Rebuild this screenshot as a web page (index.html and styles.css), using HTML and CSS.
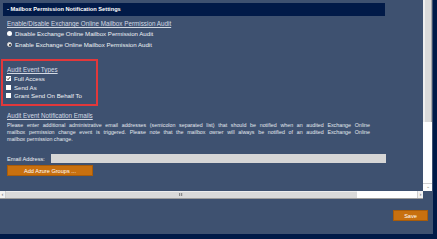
FILE: index.html
```html
<!DOCTYPE html>
<html>
<head>
<meta charset="utf-8">
<link rel="stylesheet" href="styles.css">
</head>
<body>
<div class="window">
  <div class="viewport">
    <div class="content">
      <div class="panel-title">- Mailbox Permission Notification Settings</div>

      <div class="section audit-toggle">
        <div class="heading">Enable/Disable Exchange Online Mailbox Permission Audit</div>
        <label class="opt radio-row"><span class="radio"></span>Disable Exchange Online Mailbox Permission Audit</label>
        <label class="opt radio-row"><span class="radio checked"></span>Enable Exchange Online Mailbox Permission Audit</label>
      </div>

      <div class="highlight">
        <div class="heading">Audit Event Types</div>
        <label class="opt check-row"><span class="check checked"><svg viewBox="0 0 6 6" width="6" height="6"><path d="M1.2 3.1 L2.5 4.4 L4.9 1.4" fill="none" stroke="#222" stroke-width="1.1"/></svg></span>Full Access</label>
        <label class="opt check-row"><span class="check"></span>Send As</label>
        <label class="opt check-row"><span class="check"></span>Grant Send On Behalf To</label>
      </div>

      <div class="section emails">
        <div class="heading">Audit Event Notification Emails</div>
        <p class="note">
          <span class="jline">Please enter additional administrative email addresses (semicolon separated list) that should be notified when an audited Exchange Online</span>
          <span class="jline">mailbox permission change event is triggered. Please note that the mailbox owner will always be notified of an audited Exchange Online</span>
          <span class="lline">mailbox permission change.</span>
        </p>
        <div class="email-row">
          <span class="email-label">Email Address:</span>
          <span class="email-input"></span>
        </div>
        <div class="btn add-btn">Add Azure Groups ...</div>
      </div>
    </div>

    <div class="vscroll">
      <div class="vthumb"></div>
      <div class="vtrack"></div>
      <div class="varrow">&#8964;</div>
    </div>

    <div class="hscroll">
      <div class="harrow">&#8249;</div>
      <div class="hthumb"><span class="grip"></span></div>
      <div class="htrack"></div>
      <div class="harrow">&#8250;</div>
    </div>
    <div class="corner"></div>
  </div>

  <div class="footer">
    <div class="btn save-btn">Save</div>
  </div>
</div>
</body>
</html>
```
FILE: styles.css
```css
html, body {
  margin: 0;
  padding: 0;
}
body {
  width: 437px;
  height: 239px;
  overflow: hidden;
  background: #001a47;
  font-family: "Liberation Sans", Arial, sans-serif;
  color: #e9edf3;
}
.window {
  width: 433px;
  height: 234px;
  background: #3e5170;
  display: flex;
  flex-direction: column;
}
.viewport {
  display: grid;
  grid-template-columns: 423px 9px;
  grid-template-rows: 191px 8px;
}
.content {
  padding: 3px 0 0 3px;
  overflow: hidden;
}
.panel-title {
  width: 378px;
  height: 13px;
  background: #011a48;
  color: #ffffff;
  font-weight: bold;
  font-size: 5.7px;
  line-height: 13px;
  padding-left: 4px;
}
.section {
  padding-left: 4px;
}
.audit-toggle {
  margin-top: 4px;
}
.heading {
  font-size: 6.3px;
  line-height: 8px;
  color: #d4dae4;
  text-decoration: underline;
}
.opt {
  display: flex;
  align-items: center;
  font-size: 6.1px;
  color: #eef1f5;
}
.radio-row {
  height: 11px;
}
.radio {
  width: 5px;
  height: 5px;
  border-radius: 50%;
  background: #ffffff;
  margin: 0 3px 0 0;
  box-sizing: border-box;
  position: relative;
}
.radio.checked {
  background: #f4f4f4;
  border: 1px solid #c8c8c8;
}
.radio.checked::after {
  content: "";
  position: absolute;
  left: 0.5px;
  top: 0.5px;
  width: 2px;
  height: 2px;
  border-radius: 50%;
  background: #222;
}
.highlight {
  margin: 9px 0 0 -2px;
  width: 89px;
  border: 2px solid #e2383b;
  padding: 5px 0 4px 4px;
}
.highlight .heading {
  line-height: 8.5px;
}
.check-row {
  height: 8.5px;
}
.check {
  width: 5px;
  height: 5px;
  background: #ffffff;
  margin: 0 3px 0 -1px;
  display: flex;
  align-items: center;
  justify-content: center;
}
.check svg {
  width: 5px;
  height: 5px;
}
.emails {
  margin-top: 5.5px;
}
.note {
  margin: 2px 0 0;
  width: 363px;
  font-size: 5.3px;
  line-height: 7px;
  color: #e3e8ef;
}
.jline {
  display: block;
  text-align: justify;
  text-align-last: justify;
}
.lline {
  display: block;
}
.email-row {
  display: flex;
  align-items: center;
  margin-top: 11.5px;
  height: 9px;
}
.email-label {
  width: 44px;
  font-size: 5.7px;
  color: #eef1f5;
}
.email-input {
  width: 335px;
  height: 9px;
  background: #d6d6d6;
}
.btn {
  background: #c8700f;
  color: #ffffff;
  font-size: 5.6px;
  display: flex;
  align-items: center;
  justify-content: center;
  box-sizing: border-box;
  border: 1px solid #a85c0a;
}
.add-btn {
  margin-top: 2px;
  width: 86px;
  height: 11px;
}
.vscroll {
  display: flex;
  flex-direction: column;
}
.vthumb {
  height: 122px;
  background: #dadada;
  border-left: 2px solid #efefef;
  border-right: 1px solid #a9a9a9;
}
.vtrack {
  flex: 1;
  background: #ffffff;
}
.varrow {
  height: 7px;
  background: #ffffff;
  color: #777;
  font-size: 5px;
  line-height: 5px;
  text-align: center;
  border-top: 1px solid #d0d0d0;
}
.hscroll {
  display: flex;
  height: 8px;
  box-sizing: border-box;
  border-bottom: 1px solid #9c9c9c;
}
.harrow {
  width: 5px;
  background: #f2f2f2;
  color: #666;
  font-size: 6px;
  line-height: 7px;
  text-align: center;
  border-right: 1px solid #cfcfcf;
}
.harrow:last-child {
  border-right: 0;
  border-left: 1px solid #cfcfcf;
}
.hthumb {
  width: 351px;
  background: #dadada;
  border-top: 1px solid #ededed;
  position: relative;
}
.grip {
  position: absolute;
  left: 173px;
  top: 1px;
  width: 4px;
  height: 3px;
  background: repeating-linear-gradient(90deg, #8a8a8a 0 1px, #c8c8c8 1px 2px);
}
.htrack {
  flex: 1;
  background: #ffffff;
}
.corner {
  background: #3e5170;
}
.footer {
  flex: 1;
  display: flex;
  justify-content: flex-end;
  align-items: flex-start;
  padding: 11px 5px 0 0;
}
.save-btn {
  width: 35px;
  height: 11px;
}
```
